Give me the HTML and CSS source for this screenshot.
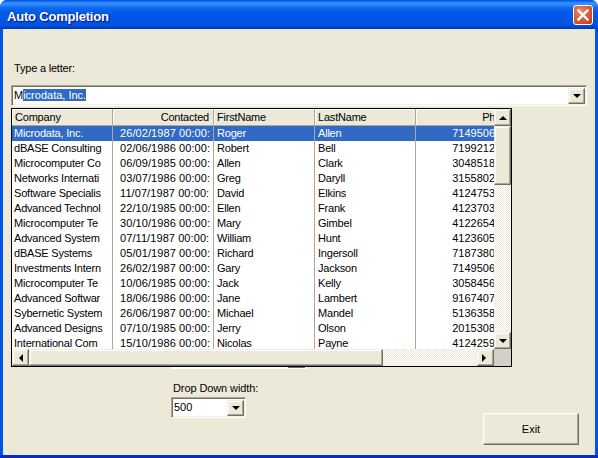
FILE: index.html
```html
<!DOCTYPE html>
<html lang="en">
<head>
<meta charset="utf-8">
<title>Auto Completion</title>
<link rel="stylesheet" href="styles.css">
</head>
<body>
<div class="window">
  <header class="titlebar">
    <span class="title">Auto Completion</span>
    <button class="close" aria-label="Close">
      <svg width="14" height="14" viewBox="0 0 14 14"><path d="M2.5 2.5 11.5 11.5M11.5 2.5 2.5 11.5" stroke="#fff" stroke-width="2.4" stroke-linecap="square" fill="none"/></svg>
    </button>
  </header>
  <main class="client">
    <div class="label type-label">Type a letter:</div>
    <div class="combo main-combo">
      <div class="field"><span>M</span><span class="sel">icrodata, Inc.</span></div>
      <div class="drop"><i class="arrow down"></i></div>
    </div>
    <div class="grid">
      <div class="table">
        <div class="row head">
          <div class="cell">Company</div><div class="cell right">Contacted</div><div class="cell">FirstName</div><div class="cell">LastName</div><div class="cell right">Phone</div>
        </div>
        <div class="row active"><div class="cell">Microdata, Inc.</div><div class="cell date">26/02/1987 00:00:</div><div class="cell">Roger</div><div class="cell">Allen</div><div class="cell num">7149506</div></div>
        <div class="row"><div class="cell">dBASE Consulting</div><div class="cell date">02/06/1986 00:00:</div><div class="cell">Robert</div><div class="cell">Bell</div><div class="cell num">7199212</div></div>
        <div class="row"><div class="cell">Microcomputer Co</div><div class="cell date">06/09/1985 00:00:</div><div class="cell">Allen</div><div class="cell">Clark</div><div class="cell num">3048518</div></div>
        <div class="row"><div class="cell">Networks Internati</div><div class="cell date">03/07/1986 00:00:</div><div class="cell">Greg</div><div class="cell">Daryll</div><div class="cell num">3155802</div></div>
        <div class="row"><div class="cell">Software Specialis</div><div class="cell date">11/07/1987 00:00:</div><div class="cell">David</div><div class="cell">Elkins</div><div class="cell num">4124753</div></div>
        <div class="row"><div class="cell">Advanced Technol</div><div class="cell date">22/10/1985 00:00:</div><div class="cell">Ellen</div><div class="cell">Frank</div><div class="cell num">4123703</div></div>
        <div class="row"><div class="cell">Microcomputer Te</div><div class="cell date">30/10/1986 00:00:</div><div class="cell">Mary</div><div class="cell">Gimbel</div><div class="cell num">4122654</div></div>
        <div class="row"><div class="cell">Advanced System</div><div class="cell date">07/11/1987 00:00:</div><div class="cell">William</div><div class="cell">Hunt</div><div class="cell num">4123605</div></div>
        <div class="row"><div class="cell">dBASE Systems</div><div class="cell date">05/01/1987 00:00:</div><div class="cell">Richard</div><div class="cell">Ingersoll</div><div class="cell num">7187380</div></div>
        <div class="row"><div class="cell">Investments Intern</div><div class="cell date">26/02/1987 00:00:</div><div class="cell">Gary</div><div class="cell">Jackson</div><div class="cell num">7149506</div></div>
        <div class="row"><div class="cell">Microcomputer Te</div><div class="cell date">10/06/1985 00:00:</div><div class="cell">Jack</div><div class="cell">Kelly</div><div class="cell num">3058456</div></div>
        <div class="row"><div class="cell">Advanced Softwar</div><div class="cell date">18/06/1986 00:00:</div><div class="cell">Jane</div><div class="cell">Lambert</div><div class="cell num">9167407</div></div>
        <div class="row"><div class="cell">Sybernetic System</div><div class="cell date">26/06/1987 00:00:</div><div class="cell">Michael</div><div class="cell">Mandel</div><div class="cell num">5136358</div></div>
        <div class="row"><div class="cell">Advanced Designs</div><div class="cell date">07/10/1985 00:00:</div><div class="cell">Jerry</div><div class="cell">Olson</div><div class="cell num">2015308</div></div>
        <div class="row"><div class="cell">International Com</div><div class="cell date">15/10/1986 00:00:</div><div class="cell">Nicolas</div><div class="cell">Payne</div><div class="cell num">4124259</div></div>
      </div>
      <div class="vscroll">
        <div class="sbtn vbtn"><i class="arrow up"></i></div>
        <div class="thumb vthumb"></div>
        <div class="track"></div>
        <div class="sbtn vbtn"><i class="arrow down"></i></div>
      </div>
      <div class="hscroll">
        <div class="sbtn hbtn"><i class="arrow left"></i></div>
        <div class="thumb hthumb"></div>
        <div class="track"></div>
        <div class="sbtn hbtn"><i class="arrow right"></i></div>
      </div>
      <div class="corner"></div>
    </div>
    <div class="peek"><div class="peek-foot"></div></div>
    <div class="label width-label">Drop Down width:</div>
    <div class="combo small-combo">
      <div class="field">500</div>
      <div class="drop"><i class="arrow down"></i></div>
    </div>
    <div class="actions"><button class="exit">Exit</button></div>
  </main>
</div>
</body>
</html>
```
FILE: styles.css
```css
* { box-sizing: border-box; }
html, body { margin: 0; padding: 0; background: #fff; }
body { width: 598px; height: 458px; overflow: hidden; font: 11px/15px "Liberation Sans", Arial, sans-serif; color: #000; }

.window { width: 598px; height: 458px; display: flex; flex-direction: column; background: linear-gradient(#0054e3 455px, #0a2cc4 455px); border-radius: 7px 7px 0 0; overflow: hidden; }
.titlebar {
  height: 29px; flex: none; display: flex; align-items: flex-start; justify-content: space-between; padding: 5px 5px 0 7px;
  background: linear-gradient(#0058e6 0, #0a5fe8 1px, #3a93ff 3px, #2a85fb 5px, #0f68ee 8px, #0059e6 13px, #0055e5 20px, #0054e3 25px, #0048d0 27px, #0036b0 29px);
}
.title { color: #fff; font: bold 13px/16px "Liberation Sans", sans-serif; letter-spacing: -.2px; margin-top: 4px; text-shadow: 1px 1px 1px #0f1089; }
.close {
  width: 20px; height: 20px; padding: 0; display: flex; align-items: center; justify-content: center;
  border: 1px solid #fff; border-radius: 3px;
  background: radial-gradient(circle at 35% 30%, #ec8a6b 0, #dd5f36 45%, #c4391a 100%);
}

.client { flex: 1; margin: 0 3px 3px 3px; background: #ece9d8; display: flex; flex-direction: column; position: relative; }
.label { line-height: 13px; white-space: nowrap; }
.type-label { margin: 33px 0 0 11px; letter-spacing: -.2px; }

.combo { display: flex; align-items: center; background: #fff; border: 1px solid; border-color: #aca899 #fff #fff #aca899; box-shadow: inset 1px 1px 0 #716f64, inset -1px -1px 0 #f1efe2; padding: 2px 1px 2px 2px; }
.field { flex: 1; min-width: 0; white-space: nowrap; line-height: 15px; }
.sel { background: #316ac5; color: #fff; }
.main-combo { width: 576px; height: 21px; margin: 10px 0 0 8px; }
.small-combo { width: 75px; height: 21px; margin: 2px 0 0 168px; }

.drop, .sbtn { flex: none; display: flex; align-items: center; justify-content: center; background: #ece9d8; border: 1px solid; border-color: #f1efe2 #716f64 #716f64 #f1efe2; box-shadow: inset -1px -1px 0 #aca899, inset 1px 1px 0 #fff; }
.drop { width: 17px; height: 16px; }

.arrow { display: block; width: 0; height: 0; border: 4px solid transparent; }
.arrow.down { border-top-color: #000; border-bottom-width: 0; }
.arrow.up { border-bottom-color: #000; border-top-width: 0; }
.arrow.left { border-right-color: #000; border-left-width: 0; }
.arrow.right { border-left-color: #000; border-right-width: 0; }

.grid {
  width: 501px; height: 259px; margin: 2px 0 0 8px; flex: none;
  display: grid; grid-template-columns: 482px 17px; grid-template-rows: 240px 17px;
  border: 1px solid #000; background: #fff;
}
.table { overflow: hidden; }
.row { display: grid; grid-template-columns: 101px 101px 101px 101px 97px; width: 501px; height: 15px; background: #fff; }
.cell { overflow: hidden; white-space: nowrap; padding-left: 3px; height: 15px; line-height: 15px; border-right: 1px solid #aca899; letter-spacing: -.2px; }
.row .cell:first-child { padding-left: 2px; }
.row .cell:last-child { border-right: 0; }
.right { text-align: right; padding: 0 4px 0 0; }
.date { padding-left: 7px; letter-spacing: .08px; }
.num { width: 79px; text-align: right; padding: 0; letter-spacing: 0; }
.head { height: 17px; background: #ece9d8; }
.head .cell { height: 17px; line-height: 16px; border-bottom: 1px solid #aca899; border-right: 1px solid #aca899; box-shadow: inset 1px 1px 0 #fff; }
.row.head .cell:first-child { padding-left: 3px; }
.row.head .cell:last-child { padding-right: 0; }
.active { background: #316ac5; color: #fff; }

.vscroll { display: flex; flex-direction: column; }
.hscroll { display: flex; }
.vbtn { height: 17px; width: 17px; }
.hbtn { height: 17px; width: 17px; }
.thumb { flex: none; background: #ece9d8; border: 1px solid; border-color: #f1efe2 #716f64 #716f64 #f1efe2; box-shadow: inset -1px -1px 0 #aca899, inset 1px 1px 0 #fff; }
.vthumb { height: 59px; }
.hthumb { width: 354px; }
.track { flex: 1; background: repeating-conic-gradient(#ece9d8 0 25%, #fff 0 50%) 0 0 / 2px 2px; }
.corner { background: #d4d0c8; }

.peek { width: 136px; height: 2px; margin-left: 168px; background: #fff; flex: none; display: flex; justify-content: flex-end; padding-right: 2px; }
.peek-foot { width: 17px; height: 1px; background: #716f64; }
.width-label { margin: 13px 0 0 170px; letter-spacing: -.1px; }

.actions { position: absolute; right: 16px; bottom: 10px; }
.exit { width: 96px; height: 32px; padding: 0; background: #ece9d8; font: 11px "Liberation Sans", sans-serif; color: #000; border: 1px solid; border-color: #fff #716f64 #716f64 #fff; box-shadow: inset -1px -1px 0 #aca899, inset 1px 1px 0 #f1efe2; }
```
